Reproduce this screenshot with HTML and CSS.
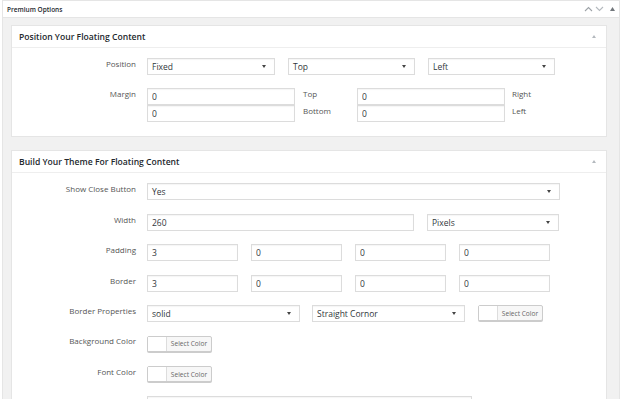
FILE: index.html
```html
<!DOCTYPE html>
<html lang="en">
<head>
    <meta charset="UTF-8">
    <title>Premium Options</title>
<link rel="stylesheet" href="styles.css">
</head>
<body>
    <div class="postbox">
        <div class="postbox-header">
            <h2>Premium Options</h2>
            <div class="handle-actions">
                <svg width="9" height="6" viewBox="0 0 9 6"><path d="M1 5 L4.5 1.5 L8 5" fill="none" stroke="#9ea3a8" stroke-width="1.1"/></svg>
                <svg width="9" height="6" viewBox="0 0 9 6"><path d="M1 1 L4.5 4.5 L8 1" fill="none" stroke="#b4b9be" stroke-width="1.1"/></svg>
                <svg width="5" height="4" viewBox="0 0 5 4"><path d="M0 4 L2.5 0 L5 4 Z" fill="#72777c"/></svg>
            </div>
        </div>

        <div class="inside">
            <div class="section">
                <div class="section-title">
                    <h3>Position Your Floating Content</h3>
                    <span class="toggle"></span>
                </div>
                <div class="section-body">
                    <div class="field">
                        <label>Position</label>
                        <div class="controls">
                            <div class="select w128"><span>Fixed</span></div>
                            <div class="select w127"><span>Top</span></div>
                            <div class="select w127"><span>Left</span></div>
                        </div>
                    </div>
                    <div class="field">
                        <label>Margin</label>
                        <div class="margin-grid">
                            <input type="text" value="0">
                            <span class="side">Top</span>
                            <input type="text" value="0">
                            <span class="side side-right">Right</span>
                            <input type="text" value="0">
                            <span class="side">Bottom</span>
                            <input type="text" value="0">
                            <span class="side side-right">Left</span>
                        </div>
                    </div>
                </div>
            </div>

            <div class="section">
                <div class="section-title">
                    <h3>Build Your Theme For Floating Content</h3>
                    <span class="toggle"></span>
                </div>
                <div class="section-body">
                    <div class="field">
                        <label>Show Close Button</label>
                        <div class="controls">
                            <div class="select w413"><span>Yes</span></div>
                        </div>
                    </div>
                    <div class="field">
                        <label>Width</label>
                        <div class="controls">
                            <input type="text" class="w267" value="260">
                            <div class="select w132"><span>Pixels</span></div>
                        </div>
                    </div>
                    <div class="field">
                        <label>Padding</label>
                        <div class="controls">
                            <input type="text" class="w91" value="3">
                            <input type="text" class="w91" value="0">
                            <input type="text" class="w91" value="0">
                            <input type="text" class="w91" value="0">
                        </div>
                    </div>
                    <div class="field">
                        <label>Border</label>
                        <div class="controls">
                            <input type="text" class="w91" value="3">
                            <input type="text" class="w91" value="0">
                            <input type="text" class="w91" value="0">
                            <input type="text" class="w91" value="0">
                        </div>
                    </div>
                    <div class="field">
                        <label>Border Properties</label>
                        <div class="controls tight">
                            <div class="select w153"><span>solid</span></div>
                            <div class="select w153"><span>Straight Cornor</span></div>
                            <button class="color-btn"><span class="swatch"></span><span class="color-text">Select Color</span></button>
                        </div>
                    </div>
                    <div class="field">
                        <label>Background Color</label>
                        <div class="controls">
                            <button class="color-btn"><span class="swatch"></span><span class="color-text">Select Color</span></button>
                        </div>
                    </div>
                    <div class="field">
                        <label>Font Color</label>
                        <div class="controls">
                            <button class="color-btn"><span class="swatch"></span><span class="color-text">Select Color</span></button>
                        </div>
                    </div>
                    <div class="field">
                        <label>Font Size</label>
                        <div class="controls">
                            <input type="text" class="w325" value="">
                        </div>
                    </div>
                </div>
            </div>
        </div>
    </div>
</body>
</html>
```

FILE: styles.css
```css
:root {
    --gray-bg: #f1f1f1;
    --line: #e5e5e5;
    --input-line: #dcdcdc;
    --label-color: #555;
    --text-color: #32373c;
}
html, body {
    margin: 0;
    height: 399px;
    overflow: hidden;
    background: #fff;
    font-family: "Open Sans", "Liberation Sans", sans-serif;
}

.postbox {
    margin-left: 2px;
    border: 1px solid var(--line);
    background-color: var(--gray-bg);
}
.postbox-header {
    height: 16px;
    display: flex;
    align-items: center;
    justify-content: space-between;
    background: #fff;
    border-bottom: 1px solid var(--line);
    padding: 0 4px 0 4px;
}
.postbox-header h2 {
    margin: 0;
    font-size: 6.5px;
    font-weight: 600;
    color: #23282d;
}
.handle-actions {
    display: flex;
    align-items: center;
    gap: 2px;
}
.handle-actions svg:last-child {
    margin-left: 4px;
}

.inside {
    padding: 7px 12px 0 8px;
}

.section {
    background: #fff;
    border: 1px solid var(--line);
    margin-bottom: 13px;
}
.section-title {
    height: 21px;
    display: flex;
    align-items: center;
    justify-content: space-between;
    border-bottom: 1px solid #eee;
    padding: 0 10px 0 7px;
}
.section-title h3 {
    margin: 0;
    font-size: 8.6px;
    font-weight: 600;
    color: #23282d;
}
.toggle {
    width: 0;
    height: 0;
    border-left: 2.5px solid transparent;
    border-right: 2.5px solid transparent;
    border-bottom: 3.5px solid #b4b9be;
}

.section-body {
    padding: 10px 0 14px 0;
}
.field {
    display: grid;
    grid-template-columns: 124px 1fr;
    column-gap: 11px;
    margin-bottom: 13.4px;
}
.field:last-child {
    margin-bottom: 0;
}
.field label {
    text-align: right;
    font-size: 8px;
    line-height: 11px;
    color: var(--label-color);
}

.controls {
    display: flex;
    align-items: center;
    gap: 13px;
    height: 17px;
}
.controls.tight {
    gap: 12px;
}
.controls.tight .color-btn {
    margin-left: 1px;
}

input[type="text"] {
    box-sizing: border-box;
    height: 17px;
    margin: 0;
    padding: 0 4px;
    border: 1px solid var(--input-line);
    box-shadow: inset 0 1px 1px rgba(0, 0, 0, 0.04);
    font-family: "Open Sans", "Liberation Sans", sans-serif;
    font-size: 8.5px;
    color: var(--text-color);
    background: #fff;
    outline: none;
}

.select {
    box-sizing: border-box;
    height: 17px;
    display: flex;
    align-items: center;
    justify-content: space-between;
    padding: 0 8px 0 4px;
    border: 1px solid var(--input-line);
    box-shadow: inset 0 1px 1px rgba(0, 0, 0, 0.04);
    font-size: 8.5px;
    color: var(--text-color);
    background: #fff;
}
.select::after {
    content: "";
    width: 0;
    height: 0;
    border-left: 2px solid transparent;
    border-right: 2px solid transparent;
    border-top: 3px solid #444;
}

.w91 { width: 91px; }
.w127 { width: 127px; }
.w128 { width: 128px; }
.w132 { width: 132px; }
.w153 { width: 153px; }
.w267 { width: 267px; }
.w325 { width: 325px; }
.w413 { width: 413px; }

.margin-grid {
    display: grid;
    grid-template-columns: 148px 62px 148px auto;
    grid-template-rows: 17px 17px;
}
.margin-grid input[type="text"] {
    width: 148px;
}
.side {
    font-size: 8px;
    line-height: 11px;
    color: var(--label-color);
    padding: 0 0 0 8px;
}
.side.side-right {
    padding-left: 7px;
}

.color-btn {
    box-sizing: border-box;
    width: 65px;
    height: 16px;
    display: flex;
    align-items: stretch;
    margin: 0;
    padding: 0;
    border: 1px solid #ccc;
    border-radius: 2px;
    background: #f7f7f7;
    box-shadow: 0 1px 0 #ccc;
    font-family: "Open Sans", "Liberation Sans", sans-serif;
}
.swatch {
    width: 18px;
    background: #fff;
    border-right: 1px solid #ddd;
}
.color-text {
    flex: 1;
    display: flex;
    align-items: center;
    justify-content: center;
    font-size: 6.6px;
    color: #666;
}
```
